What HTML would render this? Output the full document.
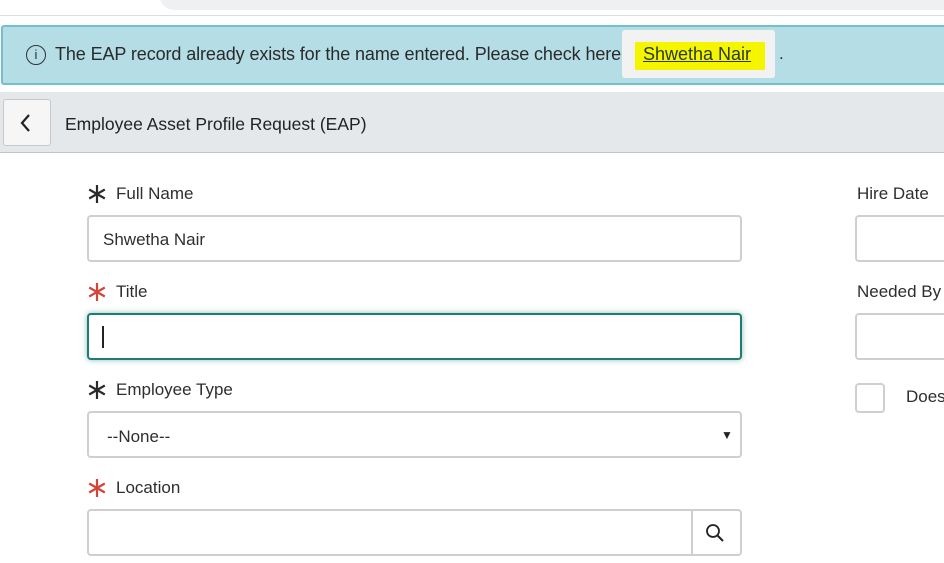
<!DOCTYPE html>
<html><head><meta charset="utf-8"><style>
*{box-sizing:border-box;margin:0;padding:0}
body{width:944px;height:563px;overflow:hidden;background:#fff;font-family:"Liberation Sans",sans-serif;color:#2e2e2e;position:relative}
.abs{position:absolute}
.inp{position:absolute;border:2px solid #cfcfcf;border-radius:4px;background:#fff;height:47px}
.lbl{position:absolute;font-size:17px;color:#2e2e2e}
.star{position:absolute}
</style></head><body>
<div class="abs" style="left:160px;top:-20px;width:800px;height:30px;background:#eef0f2;border-radius:0 0 0 14px"></div>
<div class="abs" style="left:0;top:15px;width:944px;height:1px;background:#dcdde0"></div>
<div class="abs" style="left:1px;top:25px;width:950px;height:60px;background:#b4dde5;border:2px solid #71bfcf;border-radius:3px"></div>
<div class="abs" style="left:26px;top:45px;width:20px;height:20px;border:1.5px solid #333;border-radius:50%;font-size:13px;text-align:center;line-height:17px">i</div>
<div class="abs" style="left:55px;top:44px;font-size:18px;letter-spacing:-0.1px;color:#2a2a2a">The EAP record already exists for the name entered. Please check here</div>
<div class="abs" style="left:622px;top:30px;width:153px;height:48px;background:#f2f2f2;border-radius:3px"></div>
<div class="abs" style="left:635px;top:42px;width:130px;height:28px;background:#f5f500"></div>
<div class="abs" style="left:643px;top:44px;font-size:18px;text-decoration:underline;color:#2a3a1a">Shwetha Nair</div>
<div class="abs" style="left:779px;top:44px;font-size:17px">.</div>
<div class="abs" style="left:0;top:92px;width:944px;height:61px;background:#e4e8eb;border-bottom:1px solid #c4c4c4"></div>
<div class="abs" style="left:3px;top:99px;width:48px;height:47px;background:#f6f6f6;border:1px solid #c8c8c8;border-radius:3px"></div>
<svg class="abs" style="left:18px;top:112px" width="16" height="22"><path d="M11 3 L4 11 L11 19" fill="none" stroke="#222" stroke-width="2.2"/></svg>
<div class="abs" style="left:65px;top:114px;font-size:17.5px;color:#222">Employee Asset Profile Request (EAP)</div>

<svg class="star" style="left:87px;top:184px" width="20" height="20"><path d="M10 1V19M2.2 5.5L17.8 14.5M2.2 14.5L17.8 5.5" stroke="#2a2a2a" stroke-width="2.2"/></svg>
<div class="lbl" style="left:116px;top:184px">Full Name</div>
<div class="inp" style="left:87px;top:215px;width:655px"></div>
<div class="lbl" style="left:103px;top:230px">Shwetha Nair</div>

<svg class="star" style="left:87px;top:282px" width="20" height="20"><path d="M10 1V19M2.2 5.5L17.8 14.5M2.2 14.5L17.8 5.5" stroke="#d2433a" stroke-width="2.2"/></svg>
<div class="lbl" style="left:116px;top:282px">Title</div>
<div class="inp" style="left:87px;top:313px;width:655px;border-color:#1e7d72;box-shadow:0 0 6px rgba(30,125,114,.5)"></div>
<div class="abs" style="left:102px;top:326px;width:2px;height:22px;background:#222"></div>

<svg class="star" style="left:87px;top:380px" width="20" height="20"><path d="M10 1V19M2.2 5.5L17.8 14.5M2.2 14.5L17.8 5.5" stroke="#2a2a2a" stroke-width="2.2"/></svg>
<div class="lbl" style="left:116px;top:380px">Employee Type</div>
<div class="inp" style="left:87px;top:411px;width:655px"></div>
<div class="lbl" style="left:107px;top:427px">--None--</div>
<div class="abs" style="left:721px;top:428px;font-size:12px;color:#222">▼</div>

<svg class="star" style="left:87px;top:478px" width="20" height="20"><path d="M10 1V19M2.2 5.5L17.8 14.5M2.2 14.5L17.8 5.5" stroke="#d2433a" stroke-width="2.2"/></svg>
<div class="lbl" style="left:116px;top:478px">Location</div>
<div class="inp" style="left:87px;top:509px;width:655px"></div>
<div class="abs" style="left:691px;top:509px;width:2px;height:47px;background:#cfcfcf"></div>
<svg class="abs" style="left:705px;top:523px" width="22" height="22"><circle cx="8" cy="8" r="6" fill="none" stroke="#222" stroke-width="1.8"/><path d="M12.5 12.5 L18 18" stroke="#222" stroke-width="2"/></svg>

<div class="lbl" style="left:857px;top:184px">Hire Date</div>
<div class="inp" style="left:855px;top:215px;width:120px"></div>
<div class="lbl" style="left:857px;top:282px">Needed By</div>
<div class="inp" style="left:855px;top:313px;width:120px"></div>
<div class="abs" style="left:855px;top:383px;width:30px;height:30px;border:2px solid #cfcfcf;border-radius:4px"></div>
<div class="lbl" style="left:906px;top:387px">Does</div>
</body></html>
